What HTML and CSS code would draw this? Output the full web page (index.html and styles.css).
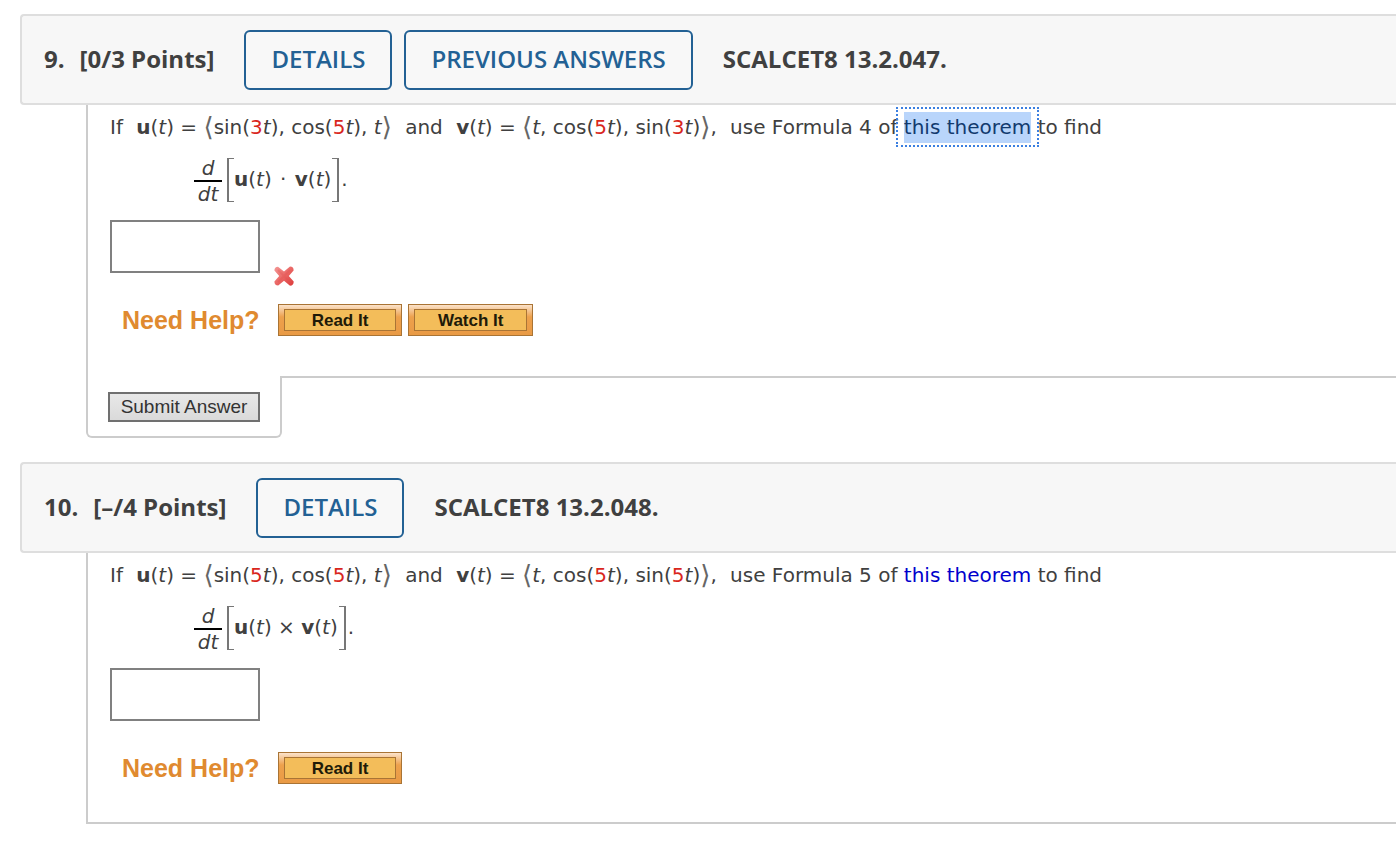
FILE: index.html
```html
<!DOCTYPE html>
<html lang="en">
<head>
<meta charset="utf-8">
<title>Assignment questions</title>
<link rel="stylesheet" href="styles.css">
</head>
<body>
<main class="assignment">
  <section class="question">
    <header class="question-header">
      <h2 class="question-points"><span>9.</span><span>[0/3 Points]</span></h2>
      <div class="header-actions">
        <button class="outline-button" type="button">DETAILS</button>
        <button class="outline-button" type="button">PREVIOUS ANSWERS</button>
      </div>
      <strong class="question-code">SCALCET8 13.2.047.</strong>
    </header>
    <div class="question-body">
      <p class="prompt">If <span class="math"><b>u</b>(<i>t</i>) = <span class="angle">⟨</span>sin(<em>3</em><i>t</i>), cos(<em>5</em><i>t</i>), <i>t</i><span class="angle">⟩</span></span> and <span class="math"><b>v</b>(<i>t</i>) = <span class="angle">⟨</span><i>t</i>, cos(<em>5</em><i>t</i>), sin(<em>3</em><i>t</i>)<span class="angle">⟩</span>,</span> use Formula 4 of <a class="theorem theorem-focused" href="#theorem">this theorem</a> to find</p>
      <div class="derivative">
        <span class="fraction"><i>d</i><i class="denominator">dt</i></span>
        <span class="bracketed"><span class="product"><b>u</b>(<i>t</i>) <span class="dot">·</span> <b>v</b>(<i>t</i>)</span></span>
        <span class="full-stop">.</span>
      </div>
      <div class="answer">
        <input class="answer-box" type="text" aria-label="Answer to question 9">
        <svg class="wrong-mark" viewBox="0 0 20 20" role="img" aria-label="Incorrect">
          <defs><linearGradient id="wrong-fill" x1="0" y1="0" x2="1" y2="1"><stop offset="0" stop-color="#f49a98"/><stop offset=".5" stop-color="#ea6765"/><stop offset="1" stop-color="#dc3a3a"/></linearGradient></defs>
          <path d="M4 0.8 L10 5.6 L16 0.4 Q19.8 0.6 19.6 4.4 L14.8 10 L19.7 15.4 Q19.8 19.4 16 19.8 L10 14.8 L4.2 19.6 Q0.4 19.4 0.4 15.6 L5.2 10 L0.4 4.6 Q0.4 0.8 4 0.8Z" fill="url(#wrong-fill)"/>
          <path d="M4 4 L16 16 M16 4 L4 16" stroke="#e4504f" stroke-width="2" opacity=".3"/>
        </svg>
      </div>
      <div class="help">
        <span class="help-title">Need Help?</span>
        <div class="help-actions">
          <button class="help-button" type="button"><span>Read It</span></button>
          <button class="help-button" type="button"><span>Watch It</span></button>
        </div>
      </div>
    </div>
    <footer class="question-footer">
      <div class="submit-tab"><button class="submit" type="button">Submit Answer</button></div>
      <div class="footer-rule"></div>
    </footer>
  </section>

  <section class="question">
    <header class="question-header">
      <h2 class="question-points"><span>10.</span><span>[–/4 Points]</span></h2>
      <div class="header-actions">
        <button class="outline-button" type="button">DETAILS</button>
      </div>
      <strong class="question-code">SCALCET8 13.2.048.</strong>
    </header>
    <div class="question-body question-body-closed">
      <p class="prompt">If <span class="math"><b>u</b>(<i>t</i>) = <span class="angle">⟨</span>sin(<em>5</em><i>t</i>), cos(<em>5</em><i>t</i>), <i>t</i><span class="angle">⟩</span></span> and <span class="math"><b>v</b>(<i>t</i>) = <span class="angle">⟨</span><i>t</i>, cos(<em>5</em><i>t</i>), sin(<em>5</em><i>t</i>)<span class="angle">⟩</span>,</span> use Formula 5 of <a class="theorem" href="#theorem">this theorem</a> to find</p>
      <div class="derivative">
        <span class="fraction"><i>d</i><i class="denominator">dt</i></span>
        <span class="bracketed"><span class="product"><b>u</b>(<i>t</i>) × <b>v</b>(<i>t</i>)</span></span>
        <span class="full-stop">.</span>
      </div>
      <div class="answer">
        <input class="answer-box" type="text" aria-label="Answer to question 10">
      </div>
      <div class="help">
        <span class="help-title">Need Help?</span>
        <div class="help-actions">
          <button class="help-button" type="button"><span>Read It</span></button>
        </div>
      </div>
    </div>
  </section>
</main>
</body>
</html>
```

FILE: styles.css
```css
* { box-sizing: border-box; }

body {
  margin: 0;
  background: #fff;
  color: #404040;
  font-family: Verdana, "DejaVu Sans", sans-serif;
  font-size: 20px;
}

.assignment {
  display: flex;
  flex-direction: column;
  gap: 24px;
  padding: 14px 0 24px 20px;
}

.question-header {
  display: flex;
  align-items: center;
  gap: 30px;
  padding: 14px 22px 13px;
  border: 2px solid #dedede;
  border-right: 0;
  border-radius: 4px 0 0 4px;
  background: #f7f7f7;
  font-family: "Open Sans", sans-serif;
  font-size: 24px;
}

.question-points {
  display: flex;
  gap: 15px;
  margin: 0;
  padding-bottom: 4px;
  font-size: 24px;
  font-weight: 700;
}

.question-code { padding-bottom: 4px; font-weight: 700; }

.header-actions { display: flex; gap: 12px; }

.outline-button {
  height: 60px;
  padding: 0 25px 4px;
  border: 2px solid #236194;
  border-radius: 6px;
  background: #f8f8f8;
  color: #236194;
  font-family: inherit;
  font-size: 24px;
  font-weight: 600;
}

.question-body {
  margin-left: 66px;
  padding: 6px 22px 40px;
  border-left: 2px solid #ccc;
}

.question-body-closed {
  padding-bottom: 38px;
  border-bottom: 2px solid #ccc;
}

.prompt { margin: 0; line-height: 32px; }

.math { margin: 0 7px; }

.math em { color: #d9261c; font-style: normal; }

.angle {
  color: #666;
  font-size: 26px;
  line-height: 20px;
  vertical-align: -2px;
}

.theorem { color: #0000cc; text-decoration: none; }

.theorem-focused {
  background: #b9d5fb;
  box-shadow: 0 -3px #b9d5fb, 0 4px #b9d5fb;
  color: #123a6e;
  outline: 2px dotted #3b7fe0;
  outline-offset: 6px;
}

.derivative {
  display: flex;
  align-items: center;
  margin: 13px 0 14px 84px;
  line-height: 24px;
}

.fraction {
  display: flex;
  flex-direction: column;
  align-items: center;
  min-width: 28px;
  margin-right: 5px;
}

.denominator {
  align-self: stretch;
  border-top: 2px solid #000;
  text-align: center;
}

.bracketed {
  display: flex;
  align-items: center;
  height: 44px;
  margin: 0 2px 2px 0;
}

.bracketed::before,
.bracketed::after {
  content: "";
  align-self: stretch;
  width: 5px;
  border: 1px solid #777;
}

.bracketed::before { border-width: 1px 0 1px 2px; }

.bracketed::after { margin-left: 1px; border-width: 1px 2px 1px 0; }

.product { padding-bottom: 2px; }

.full-stop { padding-bottom: 4px; }

.dot { margin: 0 2px; }

.answer { display: flex; gap: 14px; min-height: 66px; }

.answer-box {
  width: 150px;
  height: 53px;
  padding: 4px 8px;
  border: 2px solid #808080;
  background: #fff;
  font: inherit;
}

.wrong-mark { align-self: flex-end; width: 20px; height: 20px; }

.help {
  display: flex;
  align-items: center;
  gap: 16px;
  margin-top: 18px;
  padding-left: 12px;
}

.help-title {
  min-width: 140px;
  color: #e08a30;
  font: 700 25px/32px "Liberation Sans", Arial, sans-serif;
}

.help-actions { display: flex; gap: 6px; }

.help-button {
  height: 32px;
  padding: 4px 5px;
  border: 1px solid #a97435;
  background: linear-gradient(#fbe3cb, #eda14c 40%, #e99a45);
  color: #201a08;
  font: 700 17px/18px "Liberation Sans", Arial, sans-serif;
}

.help-button span {
  display: block;
  min-width: 112px;
  padding: 2px 23px 0;
  border: 1px solid #a97435;
  background: #f3bd5a;
}

.question-footer { display: flex; margin-left: 66px; }

.submit-tab {
  padding: 16px 20px 14px;
  border: 2px solid #ccc;
  border-top: 0;
  border-radius: 0 0 6px 6px;
}

.footer-rule { flex: 1; border-top: 2px solid #ccc; }

.submit {
  display: block;
  min-width: 152px;
  height: 30px;
  padding: 0 8px;
  border: 2px solid #707070;
  background: linear-gradient(#e8e8e8, #dadada);
  color: #333;
  font: 19px/24px "Liberation Sans", Arial, sans-serif;
}
```
